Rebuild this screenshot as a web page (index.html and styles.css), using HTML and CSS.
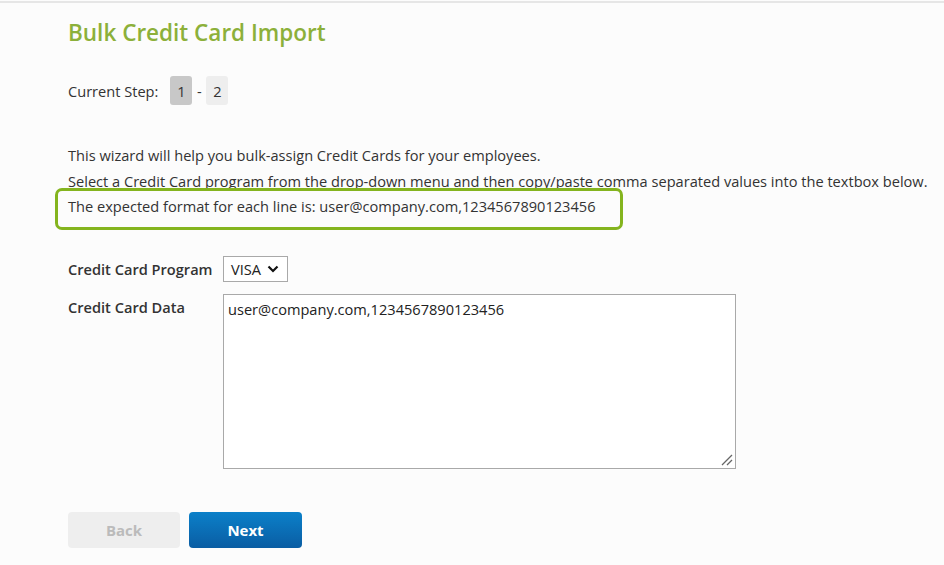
FILE: index.html
```html
<!DOCTYPE html>
<html>
<head>
<meta charset="utf-8">
<link rel="stylesheet" href="styles.css">
</head>
<body>
<div class="page">
  <h1 class="title">Bulk Credit Card Import</h1>
  <div class="steps">
    <span class="steps-label">Current Step:</span>
    <span class="step step-active">1</span>
    <span class="step-sep">-</span>
    <span class="step">2</span>
  </div>
  <div class="intro">
    <p class="line">This wizard will help you bulk-assign Credit Cards for your employees.</p>
    <p class="line">Select a Credit Card program from the drop-down menu and then copy/paste comma separated values into the textbox below.</p>
    <p class="line line-highlighted">The expected format for each line is: user@company.com,1234567890123456<span class="highlight"></span></p>
  </div>
  <div class="form">
    <div class="form-row">
      <label class="form-label">Credit Card Program</label>
      <div class="select">
        <span class="select-value">VISA</span>
        <svg class="chevron" width="12" height="8" viewBox="0 0 12 8"><path d="M1.5 1.5 L6 6 L10.5 1.5" fill="none" stroke="#111" stroke-width="2.2"/></svg>
      </div>
    </div>
    <div class="form-row">
      <label class="form-label">Credit Card Data</label>
      <div class="textarea">
        <span class="textarea-text">user@company.com,1234567890123456</span>
        <svg class="grip" width="12" height="12" viewBox="0 0 12 12"><path d="M1 11 L11 1 M6 11 L11 6" stroke="#666" stroke-width="1.3"/></svg>
      </div>
    </div>
  </div>
  <div class="buttons">
    <button class="btn btn-back">Back</button>
    <button class="btn btn-next">Next</button>
  </div>
</div>
</body>
</html>
```
FILE: styles.css
```css
html, body {
  margin: 0;
  padding: 0;
  background: #fcfcfc;
}
body {
  font-family: "Open Sans", "Liberation Sans", sans-serif;
  font-size: 14.6px;
  color: #333;
  border-top: 2px solid #e6e6e6;
  margin-top: 1px;
  min-height: 562px;
}
.page {
  padding: 0 0 0 68px;
}
.title {
  margin: 0;
  padding-top: 14px;
  font-size: 22.5px;
  font-weight: 600;
  color: #8cb03a;
  line-height: 32px;
}
.steps {
  display: flex;
  align-items: center;
  margin-top: 27px;
  height: 29px;
}
.steps-label {
  margin-right: 12px;
}
.step {
  display: inline-flex;
  align-items: center;
  justify-content: center;
  width: 22px;
  height: 29px;
  border-radius: 3px;
  background: #eeeeee;
  color: #333;
}
.step-active {
  background: #c8c8c8;
}
.step-sep {
  width: 14px;
  text-align: center;
}
.intro {
  margin-top: 38px;
}
.line {
  margin: 0;
  line-height: 25.5px;
}
.line-highlighted {
  position: relative;
  display: inline-block;
}
.highlight {
  position: absolute;
  left: -13px;
  right: -28px;
  top: -6px;
  bottom: -10px;
  border: 3px solid #84b41e;
  border-radius: 7px;
}
.form {
  margin-top: 36px;
  display: flex;
  flex-direction: column;
  gap: 12px;
}
.form-row {
  display: flex;
  align-items: flex-start;
}
.form-label {
  width: 155px;
  font-weight: 600;
  line-height: 26px;
}
.select {
  box-sizing: border-box;
  width: 65px;
  height: 26px;
  border: 1px solid #a9a9a9;
  background: #fff;
  display: flex;
  align-items: center;
  padding-left: 7px;
  gap: 6px;
}
.select-value {
  color: #222;
}
.textarea {
  position: relative;
  box-sizing: border-box;
  width: 513px;
  height: 175px;
  border: 1px solid #a9a9a9;
  background: #fff;
  padding: 3px 4px;
  color: #222;
  line-height: 22px;
}
.grip {
  position: absolute;
  right: 2px;
  bottom: 2px;
}
.buttons {
  display: flex;
  gap: 9px;
  margin-top: 43px;
}
.btn {
  width: 112px;
  height: 36px;
  border: none;
  border-radius: 4px;
  font-family: "Open Sans", "Liberation Sans", sans-serif;
  font-size: 15px;
  font-weight: 700;
}
.btn-back {
  background: #eeeeee;
  color: #bbbbbb;
}
.btn-next {
  width: 113px;
  background: linear-gradient(#0b80c9, #0a5da3);
  color: #fff;
}
```
